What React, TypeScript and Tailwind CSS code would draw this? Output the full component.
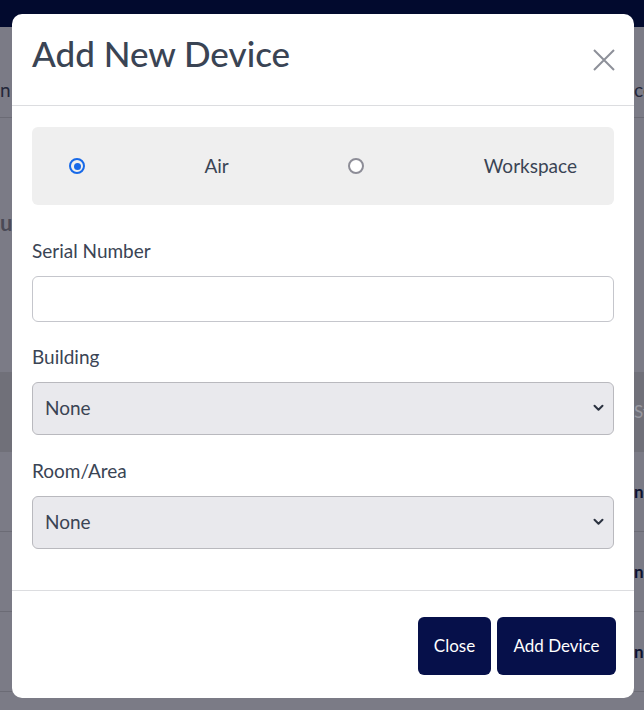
import React from "react";

// 背景のページ（モーダルの下に薄く見える部分）
const BackgroundPage = () => (
  <div className="flex flex-col">
    <div className="h-[27px] bg-[#020a2e]" />
    <div className="h-[91px] flex items-end justify-between pb-[13px] border-b border-[#6b6b75] text-[19px] text-[#24273a]">
      <div className="w-[12px] overflow-hidden whitespace-nowrap">n</div>
      <div className="w-[10px] overflow-hidden whitespace-nowrap">co</div>
    </div>
    <div className="h-[254px] pt-[88px] text-[22px] font-bold text-[#4a4a56]">
      <div className="w-[12px] overflow-hidden whitespace-nowrap">u</div>
    </div>
    <div className="h-[80px] bg-[#707079] flex items-center justify-end text-[17px] text-[#9898a0]">
      <div className="w-[10px] overflow-hidden whitespace-nowrap">St</div>
    </div>
    {[0, 1, 2].map((i) => (
      <div
        key={i}
        className="h-[80px] border-b border-[#6b6b75] flex items-center justify-end text-[17px] font-bold text-[#0d1230]"
      >
        <div className="w-[10px] overflow-hidden whitespace-nowrap">n</div>
      </div>
    ))}
  </div>
);

// ラジオボタン
const Radio = ({ checked }: { checked?: boolean }) =>
  checked ? (
    <span className="w-[16px] h-[16px] rounded-full border-[2.5px] border-[#1769e8] flex items-center justify-center shrink-0">
      <span className="w-[7px] h-[7px] rounded-full bg-[#1769e8]" />
    </span>
  ) : (
    <span className="w-[16px] h-[16px] rounded-full border-2 border-[#8d8d97] bg-white shrink-0" />
  );

// セレクトボックス
const SelectBox = () => (
  <div className="relative">
    <select className="appearance-none w-full h-[53px] bg-[#e9e9ed] border border-[#b9b9be] rounded-[6px] pl-[12px] text-[19px] text-[#3a4454] outline-none">
      <option>None</option>
    </select>
    <svg
      className="absolute right-[10px] top-[22px] pointer-events-none"
      width="11"
      height="8"
      viewBox="0 0 11 8"
      fill="none"
    >
      <path d="M1.5 1.8 L5.5 5.8 L9.5 1.8" stroke="#2b3240" strokeWidth="2" strokeLinecap="round" strokeLinejoin="round" />
    </svg>
  </div>
);

const Label = ({ children, className }: { children: React.ReactNode; className: string }) => (
  <div className={`text-[19px] leading-[24px] text-[#3a4454] ${className}`}>{children}</div>
);

export default function App() {
  return (
    <div className="relative w-full h-[710px] overflow-hidden bg-[#7b7b86] font-['Lato',sans-serif]">
      <BackgroundPage />

      {/* モーダル */}
      <div className="absolute left-[12px] top-[14px] w-[622px] h-[684px] bg-white rounded-[10px] flex flex-col">
        <div className="h-[92px] pl-[20px] pr-[19px] pb-[12px] flex items-center justify-between border-b border-[#dcdde0]">
          <h2 className="text-[35px] font-medium text-[#3a4454]">Add New Device</h2>
          <svg width="22" height="22" viewBox="0 0 22 22" className="mt-[12px]">
            <path d="M1 1 L21 21 M21 1 L1 21" stroke="#8d9099" strokeWidth="2" />
          </svg>
        </div>

        <div className="flex-1 px-[20px] pt-[21px]">
          <div className="h-[78px] bg-[#efefef] rounded-[6px] flex items-center justify-between px-[37px] text-[19px] text-[#3a4454]">
            <Radio checked />
            <span>Air</span>
            <Radio />
            <span>Workspace</span>
          </div>

          <Label className="mt-[34px]">Serial Number</Label>
          <input className="mt-[13px] w-full h-[46px] border border-[#c5c6cc] rounded-[6px] outline-none" />

          <Label className="mt-[23px]">Building</Label>
          <div className="mt-[13px]">
            <SelectBox />
          </div>

          <Label className="mt-[24px]">Room/Area</Label>
          <div className="mt-[13px]">
            <SelectBox />
          </div>
        </div>

        <div className="h-[108px] border-t border-[#dcdde0] flex items-center justify-end gap-[6px] pr-[18px] pt-[2px]">
          <button className="h-[58px] w-[73px] rounded-[6px] bg-[#06104a] text-white text-[17px]">Close</button>
          <button className="h-[58px] w-[119px] rounded-[6px] bg-[#06104a] text-white text-[17px]">Add Device</button>
        </div>
      </div>
    </div>
  );
}
